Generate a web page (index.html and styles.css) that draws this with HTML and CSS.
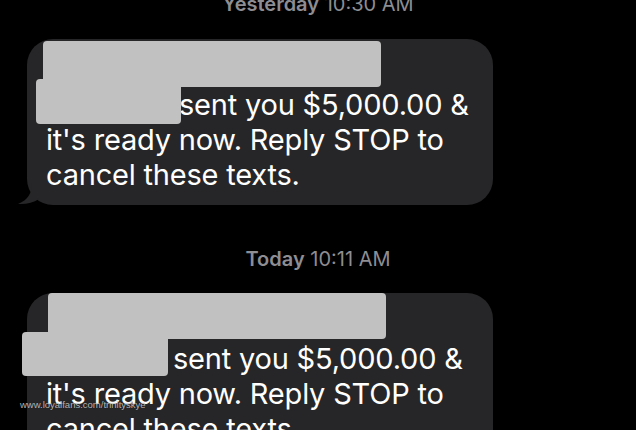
FILE: index.html
```html
<!DOCTYPE html>
<html lang="en">
<head>
  <meta charset="UTF-8">
  <title>Messages</title>
  <meta name="viewport" content="width=device-width, initial-scale=1.0">
  <link rel="stylesheet" href="styles.css">
</head>
<body>

  <div class="thread">
    <div class="stamp stamp-first"><b>Yesterday</b> 10:30 AM</div>

    <div class="bubble bubble-one">
      <span class="redact redact-top"></span>
      <span class="redact redact-name"></span>
      <div class="line blank"></div>
      <div class="line first">sent you $5,000.00 &amp;</div>
      <div class="line">it's ready now. Reply STOP to</div>
      <div class="line">cancel these texts.</div>
      <svg class="tail" width="26" height="22" viewBox="0 0 26 22">
        <path d="M14 0 C14 10 10 17 0 21 C8 21.5 15 20 21 16 L26 16 L26 0 Z" fill="#262628"/>
      </svg>
    </div>

    <div class="stamp stamp-second"><b>Today</b> 10:11 AM</div>

    <div class="bubble bubble-two">
      <span class="redact redact-top"></span>
      <span class="redact redact-name"></span>
      <div class="line blank"></div>
      <div class="line first">sent you $5,000.00 &amp;</div>
      <div class="line">it's ready now. Reply STOP to</div>
      <div class="line">cancel these texts.</div>
    </div>
  </div>

  <div class="watermark">www.loyalfans.com/trinityskye</div>

</body>
</html>
```

FILE: styles.css
```css
* {
  box-sizing: border-box;
}

html, body {
  margin: 0;
  height: 100%;
  overflow: hidden;
  background: #000;
}

body {
  font-family: Inter, 'Liberation Sans', sans-serif;
  color: #fff;
  position: relative;
}

.thread {
  display: flex;
  flex-direction: column;
  margin-top: -8px;
}

.stamp {
  text-align: center;
  color: #8d8d92;
  font-size: 20px;
  line-height: 24px;
}

.stamp b {
  font-weight: 600;
}

.stamp-second {
  margin-top: 42px;
}

.bubble {
  position: relative;
  width: 466px;
  margin-left: 27px;
  margin-top: 23px;
  padding: 13px 19px 13px 19px;
  background: #262628;
  border-radius: 26px;
  font-size: 29px;
  line-height: 35px;
  letter-spacing: -0.2px;
}

.bubble-two {
  margin-top: 22px;
}

.line {
  white-space: nowrap;
}

.line.blank {
  height: 35px;
}

.bubble-one .first {
  text-indent: 133px;
}

.bubble-two .first {
  text-indent: 127px;
}

.redact {
  position: absolute;
  background: #c1c1c1;
  border-radius: 4px;
}

.bubble-one .redact-top {
  left: 16px;
  top: 2px;
  width: 338px;
  height: 46px;
}

.bubble-one .redact-name {
  left: 9px;
  top: 40px;
  width: 145px;
  height: 45px;
}

.bubble-two .redact-top {
  left: 21px;
  top: 0;
  width: 338px;
  height: 46px;
}

.bubble-two .redact-name {
  left: -5px;
  top: 39px;
  width: 146px;
  height: 44px;
}

.tail {
  position: absolute;
  left: -9px;
  bottom: 0;
}

.watermark {
  position: absolute;
  left: 20px;
  top: 399px;
  font-family: 'Liberation Sans', sans-serif;
  font-size: 9.5px;
  line-height: 12px;
  color: rgba(235, 235, 235, 0.75);
  text-shadow: 0 0 1px rgba(0, 0, 0, 0.6);
}
```
